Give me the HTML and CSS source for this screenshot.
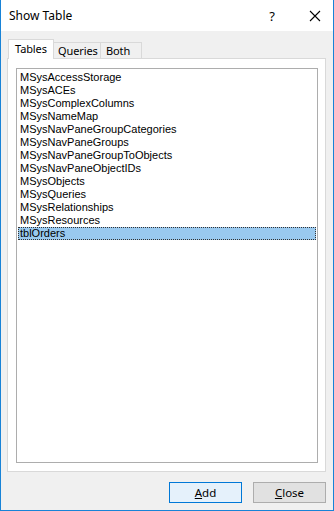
FILE: index.html
```html
<!DOCTYPE html>
<html>
<head>
<meta charset="utf-8">
<link rel="stylesheet" href="styles.css">
</head>
<body>
<div class="window">
  <div class="titlebar">
    <span class="title">Show Table</span>
    <span class="help">?</span>
    <svg class="close-x" width="12" height="12" viewBox="0 0 12 12"><path d="M1 1L11 11M11 1L1 11" stroke="#000" stroke-width="1.1" fill="none"/></svg>
  </div>
  <div class="body">
    <div class="tabs">
      <div class="tab active">Tables</div>
      <div class="tab">Queries</div>
      <div class="tab">Both</div>
    </div>
    <div class="panel">
      <div class="listbox">
        <div class="item">MSysAccessStorage</div>
        <div class="item">MSysACEs</div>
        <div class="item">MSysComplexColumns</div>
        <div class="item">MSysNameMap</div>
        <div class="item">MSysNavPaneGroupCategories</div>
        <div class="item">MSysNavPaneGroups</div>
        <div class="item">MSysNavPaneGroupToObjects</div>
        <div class="item">MSysNavPaneObjectIDs</div>
        <div class="item">MSysObjects</div>
        <div class="item">MSysQueries</div>
        <div class="item">MSysRelationships</div>
        <div class="item">MSysResources</div>
        <div class="item selected">tblOrders</div>
      </div>
    </div>
    <div class="buttons">
      <button class="btn default"><u>A</u>dd</button>
      <button class="btn"><u>C</u>lose</button>
    </div>
  </div>
</div>
</body>
</html>
```
FILE: styles.css
```css
* { box-sizing: border-box; }
html, body { margin: 0; padding: 0; }
body { width: 334px; height: 511px; overflow: hidden; font-family: "Noto Sans", "Liberation Sans", sans-serif; }
.window {
  width: 334px; height: 511px;
  border: 1px solid #1883d7; border-top: none;
  background: #f0f0f0;
  display: flex; flex-direction: column;
}
.titlebar {
  height: 31px; background: #fff;
  display: flex; align-items: center;
  padding-left: 8px;
  font-size: 12px; color: #000;
}
.title { flex: 1; font-size: 12px; }
.help { font-size: 13px; margin-right: 34px; }
.close-x { margin-right: 12px; }
.body { flex: 1; padding: 8px 7px 0 6px; display: flex; flex-direction: column; }
.tabs { display: flex; align-items: flex-end; height: 19px; padding-left: 1px; position: relative; z-index: 1; }
.tab {
  font-size: 11px; letter-spacing: -0.1px; height: 16px; line-height: 16px;
  border: 1px solid #d9d9d9; border-bottom: none;
  background: #f0f0f0; padding: 0 0 0 4px;
  margin-left: -1px; white-space: nowrap; overflow: hidden;
}
.tab:nth-child(2) { width: 48px; }
.tab:nth-child(3) { width: 42px; padding-left: 5px; }
.tab.active {
  height: 20px; background: #fff; width: 46px; margin-left: 0;
  line-height: 17px; padding-left: 6px; margin-bottom: -1px;
}
.panel {
  height: 414px; background: #fff; border: 1px solid #d9d9d9;
  padding: 9px 7px 8px 8px;
}
.listbox {
  height: 100%; border: 1px solid #adadad; background: #fff;
  padding: 2px 0 0 1px;
  font-family: "Liberation Sans", "Arial", sans-serif; font-size: 11px;
}
.item { height: 13px; line-height: 13px; padding-left: 2px; color: #000; white-space: nowrap; }
.item.selected { background: #99c9ef; outline: 1px dotted #333; outline-offset: -1px; margin-right: 1px; }
.buttons { display: flex; justify-content: flex-end; gap: 11px; padding-top: 10px; padding-right: 0; }
.btn {
  width: 73px; height: 21px; font-family: "Noto Sans", "Liberation Sans", sans-serif;
  font-size: 11.5px; border: 1px solid #adadad; background: #e1e1e1; color: #000; padding: 0;
}
.btn.default { border-color: #0078d7; background: #e5f1fb; }
```
